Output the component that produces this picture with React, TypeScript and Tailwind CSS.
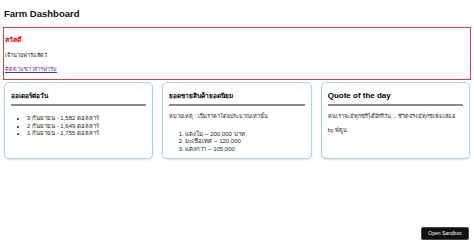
import React from 'react';

const font = { fontFamily: '"Liberation Sans", "Noto Sans", Arial, sans-serif' };

interface CardProps {
  title: string;
  thai?: boolean;
  children: React.ReactNode;
}

function Card({ title, thai, children }: CardProps) {
  return (
    <div className="h-[77px] rounded-[5px] border border-[#a9d6e5] bg-white px-[6px] pt-[8px] shadow-[0_1px_2px_rgba(0,0,0,0.12)]">
      <h3 className={thai ? 'text-[6.5px] font-bold leading-[10px] text-black' : 'text-[8px] font-bold leading-[10px] text-black'}>
        {title}
      </h3>
      <div className="mt-[3px] h-[2px] bg-[#8a8a8a]" />
      <div className="mt-[7px] text-[5.5px] leading-[7.5px] text-[#222]">{children}</div>
    </div>
  );
}

export default function App() {
  const orders = [
    '3 กันยายน - 1,582 ดอลลาร์',
    '2 กันยายน - 1,649 ดอลลาร์',
    '1 กันยายน - 1,755 ดอลลาร์',
  ];
  const products = ['แตงโม ~ 200,000 บาท', 'มะเขือเทศ ~ 120,000', 'แตงกวา ~ 105,000'];

  return (
    <div className="relative h-[248px] w-[474px] overflow-hidden bg-white" style={font}>
      {/* Header */}
      <h1 className="px-[4px] pt-[7px] text-[9.5px] font-bold leading-[14px] text-[#111]">Farm Dashboard</h1>

      {/* Greeting box */}
      <div className="mx-[3px] mt-[6px] h-[53px] border border-[#d2404f] px-[1px] pt-[7px]">
        <p className="text-[7px] font-bold leading-[9px] text-[#e8101e]">สวัสดี</p>
        <p className="mt-[7px] text-[5.5px] leading-[8px] text-[#222]">เจ้านายฟาร์มสัตว์</p>
        <a href="#" className="mt-[6px] block text-[5.5px] leading-[8px] text-[#5b2a9a] underline">
          ติดตามข่าวสารฟาร์ม
        </a>
      </div>

      {/* Cards */}
      <div className="mt-[2px] grid grid-cols-3 gap-[9px] px-[4px]">
        <Card title="ออเดอร์ต่อวัน" thai>
          <ul className="list-disc pl-[16px] pt-[2px] text-[6px]">
            {orders.map((o) => (
              <li key={o}>{o}</li>
            ))}
          </ul>
        </Card>
        <Card title="ยอดขายสินค้ายอดนิยม" thai>
          <p>หมายเหตุ : เป็นราคาโดยประมาณเท่านั้น</p>
          <ol className="mt-[10px] list-decimal pl-[16px] text-[6px]">
            {products.map((p) => (
              <li key={p}>{p}</li>
            ))}
          </ol>
        </Card>
        <Card title="Quote of the day">
          <p>คนเราจะมีทุกข์ก็ได้อีกก็วัน ... ชีวิตจริงมีทุกข์เพิ่มเสมอ</p>
          <p className="mt-[6px]">by พี่ตูน</p>
        </Card>
      </div>

      {/* Sandbox button */}
      <button className="absolute bottom-[8px] right-[5px] h-[13px] w-[48px] rounded-[2px] border border-[#444] bg-[#111] text-[5px] leading-[11px] text-white">
        Open Sandbox
      </button>
    </div>
  );
}
